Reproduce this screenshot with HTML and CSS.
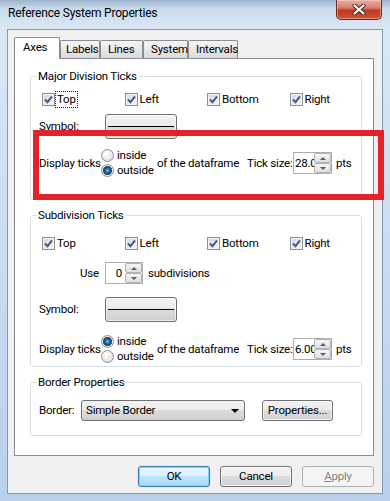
FILE: index.html
```html
<!DOCTYPE html>
<html>
<head>
  <title>Reference System Properties</title>
  <link rel="stylesheet" href="styles.css">
</head>
<body>
  <div class="window">
    <div class="titlebar">
      <span class="title">Reference System Properties</span>
      <div class="close-btn">
        <svg width="14" height="11" viewBox="0 0 14 11">
          <path d="M2.5 1.5 L11.5 9.5 M11.5 1.5 L2.5 9.5" stroke="#4a1d16" stroke-width="4" stroke-linecap="round"/>
          <path d="M2.5 1.5 L11.5 9.5 M11.5 1.5 L2.5 9.5" stroke="#fff" stroke-width="2.2" stroke-linecap="round"/>
        </svg>
      </div>
    </div>

    <div class="client">
      <div class="tabs">
        <div class="tab active tab-axes">Axes</div>
        <div class="tab tab-labels">Labels</div>
        <div class="tab tab-lines">Lines</div>
        <div class="tab tab-system">System</div>
        <div class="tab tab-intervals">Intervals</div>
      </div>

      <div class="panel">
        <!-- Major ticks -->
        <fieldset class="group group-major">
          <legend>Major Division Ticks</legend>
          <div class="checks">
            <label class="check"><span class="box"><svg width="9" height="9" viewBox="0 0 9 9"><path d="M1 4.5 L3.5 7.2 L8 1.3" fill="none" stroke="#44598a" stroke-width="1.9"/></svg></span><span class="focus">Top</span></label>
            <label class="check"><span class="box"><svg width="9" height="9" viewBox="0 0 9 9"><path d="M1 4.5 L3.5 7.2 L8 1.3" fill="none" stroke="#44598a" stroke-width="1.9"/></svg></span>Left</label>
            <label class="check"><span class="box"><svg width="9" height="9" viewBox="0 0 9 9"><path d="M1 4.5 L3.5 7.2 L8 1.3" fill="none" stroke="#44598a" stroke-width="1.9"/></svg></span>Bottom</label>
            <label class="check"><span class="box"><svg width="9" height="9" viewBox="0 0 9 9"><path d="M1 4.5 L3.5 7.2 L8 1.3" fill="none" stroke="#44598a" stroke-width="1.9"/></svg></span>Right</label>
          </div>
          <div class="row symbol-row major-symbol">
            <span class="lbl-symbol">Symbol:</span>
            <div class="symbol-btn"><span class="symbol-line"></span></div>
          </div>
          <div class="row ticks-row major-ticks">
            <span class="lbl-ticks">Display ticks</span>
            <div class="radios">
              <label class="radio"><span class="dot"></span>inside</label>
              <label class="radio"><span class="dot on"></span>outside</label>
            </div>
            <span class="dataframe">of the dataframe</span>
            <span class="ticksize">Tick size:</span>
            <div class="spin spin-tick">
              <span class="spin-val">28.00</span>
              <div class="spin-btns"><span class="up"></span><span class="down"></span></div>
            </div>
            <span class="pts">pts</span>
          </div>
        </fieldset>

        <!-- Subdivision ticks -->
        <fieldset class="group group-sub">
          <legend>Subdivision Ticks</legend>
          <div class="checks">
            <label class="check"><span class="box"><svg width="9" height="9" viewBox="0 0 9 9"><path d="M1 4.5 L3.5 7.2 L8 1.3" fill="none" stroke="#44598a" stroke-width="1.9"/></svg></span>Top</label>
            <label class="check"><span class="box"><svg width="9" height="9" viewBox="0 0 9 9"><path d="M1 4.5 L3.5 7.2 L8 1.3" fill="none" stroke="#44598a" stroke-width="1.9"/></svg></span>Left</label>
            <label class="check"><span class="box"><svg width="9" height="9" viewBox="0 0 9 9"><path d="M1 4.5 L3.5 7.2 L8 1.3" fill="none" stroke="#44598a" stroke-width="1.9"/></svg></span>Bottom</label>
            <label class="check"><span class="box"><svg width="9" height="9" viewBox="0 0 9 9"><path d="M1 4.5 L3.5 7.2 L8 1.3" fill="none" stroke="#44598a" stroke-width="1.9"/></svg></span>Right</label>
          </div>
          <div class="row use-row">
            <span class="lbl-use">Use</span>
            <div class="spin spin-use">
              <span class="spin-val right">0</span>
              <div class="spin-btns"><span class="up"></span><span class="down"></span></div>
            </div>
            <span class="subdivs">subdivisions</span>
          </div>
          <div class="row symbol-row sub-symbol">
            <span class="lbl-symbol">Symbol:</span>
            <div class="symbol-btn"><span class="symbol-line"></span></div>
          </div>
          <div class="row ticks-row sub-ticks">
            <span class="lbl-ticks">Display ticks</span>
            <div class="radios">
              <label class="radio"><span class="dot on"></span>inside</label>
              <label class="radio"><span class="dot"></span>outside</label>
            </div>
            <span class="dataframe">of the dataframe</span>
            <span class="ticksize">Tick size:</span>
            <div class="spin spin-tick">
              <span class="spin-val">6.000</span>
              <div class="spin-btns"><span class="up"></span><span class="down"></span></div>
            </div>
            <span class="pts">pts</span>
          </div>
        </fieldset>

        <!-- Border -->
        <fieldset class="group group-border">
          <legend>Border Properties</legend>
          <div class="row border-row">
            <span class="lbl-border">Border:</span>
            <div class="combo"><span>Simple Border</span><span class="arrow"></span></div>
            <div class="btn btn-props">Properties...</div>
          </div>
        </fieldset>
      </div>

      <div class="buttons">
        <div class="btn btn-default">OK</div>
        <div class="btn">Cancel</div>
        <div class="btn btn-disabled"><u>A</u>pply</div>
      </div>
    </div>

    <div class="highlight"></div>
  </div>
</body>
</html>
```

FILE: styles.css
```css
body {
  margin: 0;
  font-family: Roboto, "Liberation Sans", sans-serif;
  font-size: 11.5px;
  letter-spacing: -0.2px;
  line-height: 15px;
  white-space: nowrap;
  color: #000;
}

.window {
  position: relative;
  width: 390px;
  height: 501px;
  box-sizing: border-box;
  padding: 0 7px 7px;
  display: flex;
  flex-direction: column;
  background: linear-gradient(#9db4cc 0, #c9dbee 9px, #dae7f4 28px, #c6daef 60%, #b8d0ea 100%);
}

/* title bar */
.titlebar {
  height: 29px;
  margin: 0 1px;
  display: flex;
  align-items: flex-start;
  justify-content: space-between;
}

.title {
  margin-top: 6px;
  font-size: 12px;
}

.close-btn {
  width: 46px;
  height: 20px;
  box-sizing: border-box;
  border: 1px solid #6b2a21;
  border-top: none;
  border-radius: 0 0 5px 5px;
  background: linear-gradient(#eab0a2 0, #d9806b 40%, #c1391f 55%, #cc5236 100%);
  box-shadow: inset 0 0 0 1px rgba(255, 220, 210, 0.45);
  display: flex;
  align-items: center;
  justify-content: center;
}

/* client area */
.client {
  flex: 1;
  border: 1px solid #8498ae;
  background: #f0f0f0;
  padding: 7px 8px 6px 6px;
  display: flex;
  flex-direction: column;
}

.tabs {
  display: flex;
  align-items: flex-end;
  height: 21px;
  position: relative;
  z-index: 1;
}

.tab {
  height: 18px;
  box-sizing: border-box;
  border: 1px solid #898c95;
  border-bottom: none;
  border-radius: 2px 2px 0 0;
  padding-left: 5px;
  line-height: 17px;
  background: linear-gradient(#f4f4f4, #e8e8e8 50%, #dadada);
}

.tab.active {
  height: 22px;
  margin-bottom: -1px;
  padding-left: 8px;
  line-height: 19px;
  background: #fff;
}

.tab-axes { width: 46px; }
.tab-labels { width: 40px; }
.tab-lines { width: 43px; padding-left: 7px; }
.tab-system { width: 45px; padding-left: 7px; }
.tab-intervals { width: 50px; padding-left: 7px; }

.panel {
  flex: 1;
  border: 1px solid #898c95;
  background: #fff;
  padding: 10px 11px 0 15px;
}

/* group boxes */
.group {
  margin: 0;
  min-width: 0;
  border: 1px solid #d5dfe5;
  border-radius: 3px;
  padding: 0 6px;
}

.group legend {
  padding: 0 1px;
}

.group + .group {
  margin-top: 8px;
}

.group-major { padding-bottom: 21px; }
.group-sub { padding-bottom: 2px; }
.group-border { padding-bottom: 14px; }

.row {
  display: flex;
  align-items: center;
}

.checks {
  display: grid;
  grid-template-columns: repeat(4, 82.5px);
  align-items: center;
  height: 18px;
  margin-left: 5px;
}

.group-major .checks { margin-top: 6px; }
.group-sub .checks { margin-top: 11px; }

.check {
  display: flex;
  align-items: center;
  gap: 2px;
}

.box {
  width: 13px;
  height: 13px;
  box-sizing: border-box;
  border: 1px solid #8e8f8f;
  background: linear-gradient(135deg, #d3d6da, #f7f7f7);
  box-shadow: inset 0 0 0 1px #f2f2f2;
  display: flex;
  align-items: center;
  justify-content: center;
}

.focus {
  outline: 1px dotted #222;
  padding: 0 1px;
  margin-left: -1px;
}

/* symbol */
.major-symbol { margin-top: 6px; }
.sub-symbol { margin-top: 13px; }

.lbl-symbol {
  width: 66px;
  margin-left: 2px;
}

.symbol-btn {
  width: 72px;
  height: 25px;
  box-sizing: border-box;
  border: 1px solid #707070;
  border-radius: 3px;
  background: linear-gradient(#f2f2f2 0, #ebebeb 50%, #dddddd 50%, #cfcfcf 100%);
  box-shadow: inset 0 0 0 1px rgba(255, 255, 255, 0.6);
  display: flex;
  align-items: center;
  padding: 0 2px;
}

.symbol-line {
  flex: 1;
  height: 1px;
  background: #000;
}

/* display ticks */
.major-ticks { margin-top: 9px; }
.sub-ticks { margin-top: 12px; }

.lbl-ticks {
  width: 62px;
  margin-left: 2px;
}

.radios {
  width: 56px;
}

.radio {
  display: flex;
  align-items: center;
  gap: 3px;
}

.dot {
  width: 13px;
  height: 13px;
  box-sizing: border-box;
  border-radius: 50%;
  border: 1px solid #8e8f8f;
  background: radial-gradient(circle at 40% 35%, #fff 0, #e8e8e8 55%, #cdcdcd 100%);
}

.dot.on {
  background: radial-gradient(circle, #8fd6f6 0, #2a83b8 1.5px, #0e4b78 3.5px, #44525e 4.3px, #f1f1f1 5px, #d6d6d6 100%);
}

.dataframe { width: 90px; }
.ticksize { width: 46px; }

.spin {
  display: flex;
  height: 22px;
  box-sizing: border-box;
  border: 1px solid #abadb3;
  background: #fff;
}

.spin-tick { width: 39px; }
.spin-use { width: 38px; }

.spin-val {
  flex: 1;
  overflow: hidden;
  line-height: 20px;
  padding-left: 1px;
}

.spin-val.right {
  text-align: right;
  padding-right: 3px;
}

.spin-btns {
  width: 17px;
  display: flex;
  flex-direction: column;
}

.spin-btns span {
  flex: 1;
  border: 1px solid #b3b3b3;
  border-radius: 2px;
  background: linear-gradient(#f5f5f5, #dedede);
  display: flex;
  align-items: center;
  justify-content: center;
}

.spin-btns .up::before {
  content: "";
  border-left: 3px solid transparent;
  border-right: 3px solid transparent;
  border-bottom: 3px solid #4b5e84;
}

.spin-btns .down::before {
  content: "";
  border-left: 3px solid transparent;
  border-right: 3px solid transparent;
  border-top: 3px solid #4b5e84;
}

.pts { margin-left: 4px; }

/* use subdivisions */
.use-row { margin-top: 10px; }

.lbl-use {
  width: 60px;
  margin-left: 2px;
  padding-right: 6px;
  text-align: right;
}

.subdivs { margin-left: 5px; }

/* border */
.border-row { margin-top: 10px; }

.lbl-border {
  width: 42px;
  margin-left: 2px;
}

.combo {
  width: 164px;
  height: 21px;
  box-sizing: border-box;
  border: 1px solid #707070;
  border-radius: 3px;
  background: linear-gradient(#f2f2f2 0, #ebebeb 50%, #dddddd 50%, #cfcfcf 100%);
  display: flex;
  align-items: center;
  justify-content: space-between;
  padding: 0 5px 0 4px;
}

.arrow {
  border-left: 4px solid transparent;
  border-right: 4px solid transparent;
  border-top: 4px solid #000;
}

/* buttons */
.btn {
  width: 72px;
  height: 21px;
  box-sizing: border-box;
  border: 1px solid #707070;
  border-radius: 3px;
  background: linear-gradient(#f2f2f2 0, #ebebeb 50%, #dddddd 50%, #cfcfcf 100%);
  box-shadow: inset 0 0 0 1px rgba(255, 255, 255, 0.7);
  text-align: center;
  line-height: 19px;
}

.btn-props {
  width: 71px;
  margin-left: 17px;
}

.buttons {
  display: flex;
  justify-content: flex-end;
  gap: 10px;
  margin-top: 10px;
}

.btn-default {
  border-color: #3c7fb1;
  background: linear-gradient(#eaf6fd 0, #d9f0fc 50%, #bee6fd 50%, #a7d9f5 100%);
  box-shadow: inset 0 0 0 1px #7fd2f5, 0 0 1px #6ab6e0;
}

.btn-disabled {
  border-color: #adb2b5;
  background: #f4f4f4;
  box-shadow: none;
  color: #838383;
}

/* red annotation box */
.highlight {
  position: absolute;
  left: 33px;
  top: 130px;
  width: 351px;
  height: 70px;
  box-sizing: border-box;
  border: 6px solid #e4222a;
}
```
